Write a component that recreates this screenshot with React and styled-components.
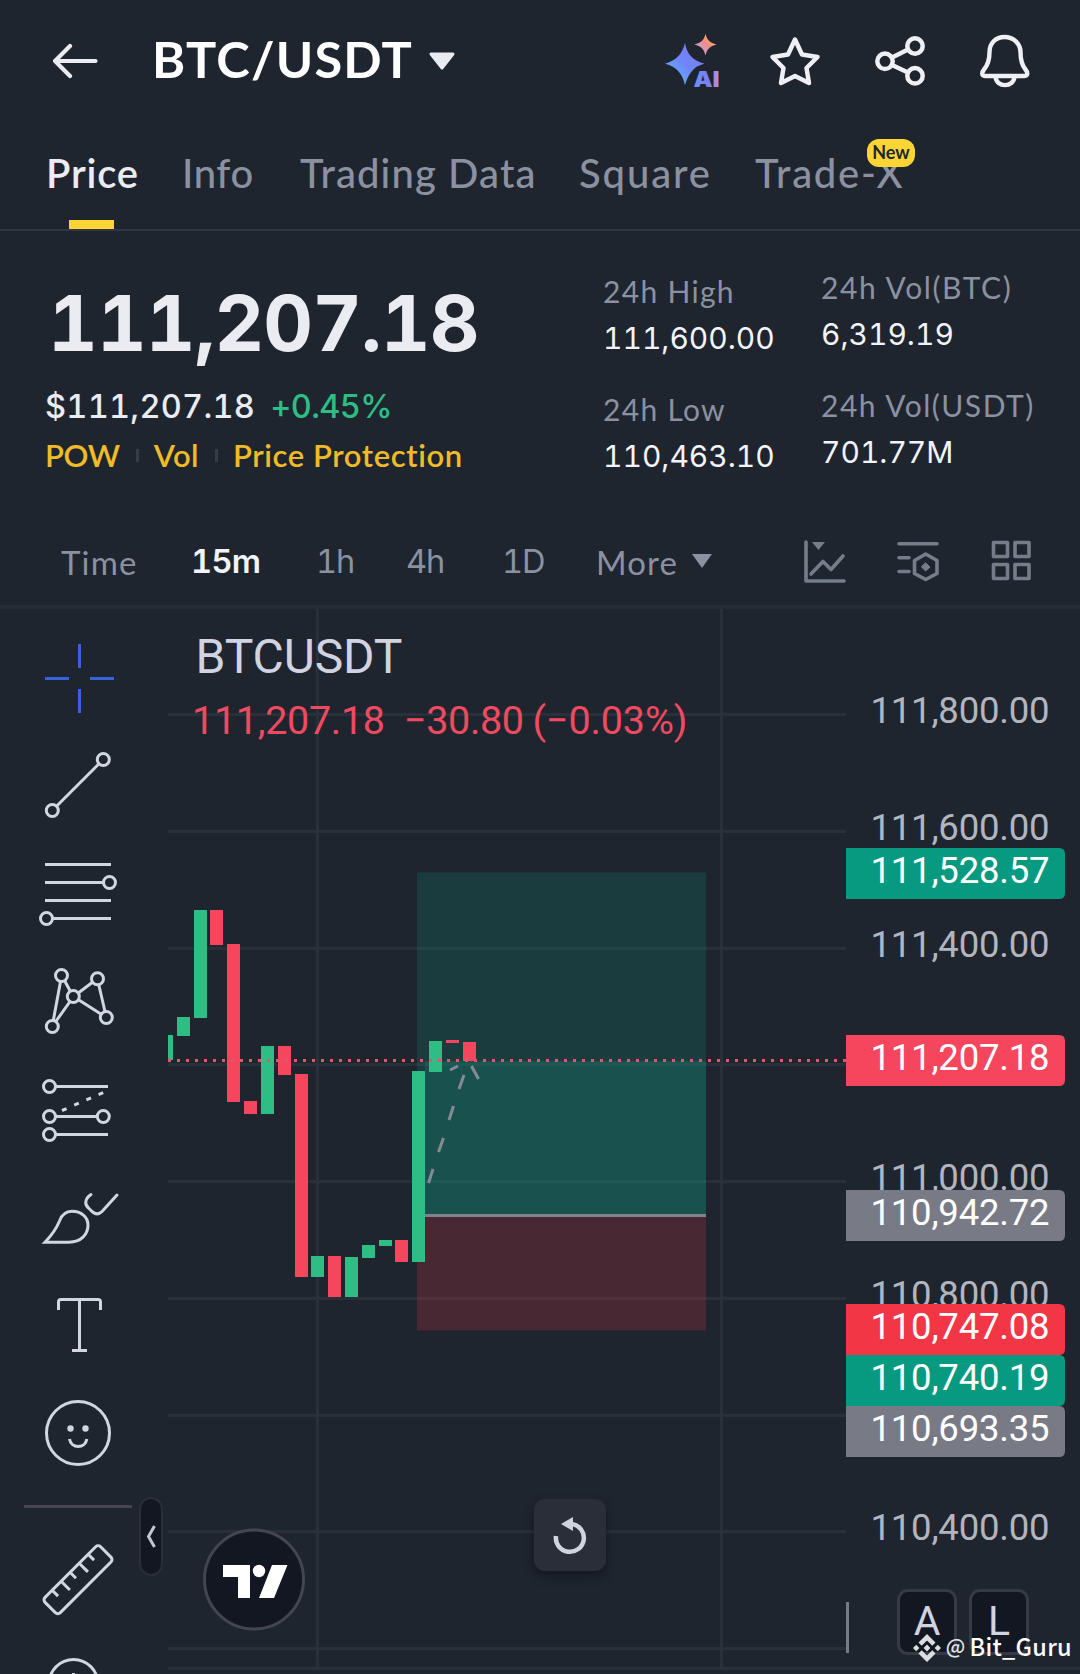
import React from "react";
import styled, { createGlobalStyle } from "styled-components";

const GlobalStyle = createGlobalStyle`
  * { box-sizing: border-box; }
  html, body { margin: 0; padding: 0; background: #1f252f; }
  body { width: 1080px; height: 1674px; overflow: hidden; }
`;

const words = `Lato, "Open Sans", sans-serif`;
const figures = `Inter, "Open Sans", sans-serif`;
const chartFont = `Roboto, "Liberation Sans", sans-serif`;

const Screen = styled.main`
  width: 1080px;
  height: 1674px;
  display: flex;
  flex-direction: column;
  overflow: hidden;
  background: #1f252f;
  color: #eaecef;
  font-family: ${words};
`;

const Label = styled.span`
  display: block;
  white-space: nowrap;
  font-family: ${(p) => (p.$figures ? figures : words)};
  font-feature-settings: ${(p) => (p.$figures ? '"tnum"' : "normal")};
  font-size: ${(p) => p.$size}px;
  line-height: ${(p) => p.$line || 40}px;
  font-weight: ${(p) => p.$weight || 400};
  letter-spacing: ${(p) => p.$track || 0}px;
  color: ${(p) => p.$color || "#eaecf2"};
`;

const Header = styled.header`
  height: 120px;
  display: flex;
  align-items: center;
  padding: 0 51px 0 53px;
`;

const BackIcon = styled.svg`
  width: 45px;
  height: 38px;
  margin-right: 54px;
`;

const Pair = styled.div`
  display: flex;
  align-items: center;
  gap: 15px;
  flex: 1;
  padding-bottom: 2px;
`;

const CaretIcon = styled.svg`
  width: 28px;
  height: 20px;
  margin-top: 3px;
`;

const HeaderActions = styled.div`
  display: grid;
  grid-template-columns: repeat(4, 60px);
  column-gap: 45px;
  margin-right: -6px;
`;

const ActionIcon = styled.svg`
  width: 60px;
  height: 60px;
  overflow: visible;
`;

const Tabs = styled.nav`
  height: 111px;
  display: grid;
  grid-template-columns: 136px 118px 279px 176px 160px;
  padding-left: 46px;
  border-bottom: 2px solid #303640;
`;

const Tab = styled.div`
  position: relative;
  height: 109px;
  padding-top: 33px;
  &::after {
    content: "";
    display: ${(p) => (p.$active ? "block" : "none")};
    width: 45px;
    height: 9px;
    margin: 27px 0 0 23px;
    background: #fcd535;
  }
`;

const NewBadge = styled.span`
  position: absolute;
  left: 112px;
  top: 19px;
  width: 48px;
  height: 28px;
  border-radius: 12px;
  background: #fcd535;
  color: #202630;
  font: 700 18px/27px ${words};
  text-align: center;
`;

const Quote = styled.section`
  height: 289px;
  display: grid;
  grid-template-columns: 558px 218px 1fr;
  padding: 0 0 0 45px;
`;

const Headline = styled.div`
  padding-top: 42px;
`;

const LastPrice = styled(Label)`
  padding-left: 3px;
  margin-bottom: 14px;
`;

const Row = styled.div`
  display: flex;
  align-items: center;
  gap: ${(p) => p.$gap || 0}px;
`;

const TagRow = styled(Row)`
  margin-top: 8px;
`;

const TagDivider = styled.i`
  width: 3px;
  height: 13px;
  background: #373c47;
  margin: 0 ${(p) => p.$after}px 0 ${(p) => p.$before}px;
`;

const Stats = styled.div`
  padding-top: ${(p) => p.$top}px;
  display: grid;
  grid-template-rows: 118px 118px;
`;

const Intervals = styled.nav`
  height: 89px;
  display: flex;
  align-items: flex-start;
  justify-content: space-between;
  padding: 20px 49px 0 61px;
  border-bottom: 4px solid #262c36;
`;

const IntervalList = styled.div`
  display: grid;
  grid-template-columns: 130px 125px 90px 96px 94px 130px;
  padding-top: 1px;
`;

const Interval = styled(Row)`
  padding-top: ${(p) => (p.$figures ? 1 : 0)}px;
`;

const ToolIcons = styled.div`
  display: grid;
  grid-template-columns: repeat(3, 44px);
  column-gap: 49px;
  margin: -1px -2px 0 0;
`;

const SmallIcon = styled.svg`
  width: 44px;
  height: 44px;
  fill: none;
  stroke: #757d8a;
  stroke-width: 3.6;
  stroke-linecap: round;
  stroke-linejoin: round;
`;

const Workspace = styled.section`
  position: relative;
  flex: 1;
  min-height: 0;
  display: flex;
`;

const Drawing = styled.aside`
  width: 168px;
  padding: 16px 0 0 24px;
`;

const Tool = styled.svg`
  display: block;
  width: 108px;
  height: 108px;
  fill: none;
  stroke: #d1d6e2;
  stroke-width: 3;
`;

const ToolRule = styled.hr`
  width: 108px;
  height: 3px;
  border: 0;
  margin: 16px 0 18px;
  background: #434651;
`;

const Plot = styled.svg`
  display: block;
  width: 912px;
  height: 1065px;
  text {
    font-family: ${chartFont};
  }
`;

const CollapseHandle = styled.button`
  position: absolute;
  left: 139px;
  top: 888px;
  width: 24px;
  height: 79px;
  padding: 0;
  border: 2px solid #2a2e39;
  border-radius: 12px;
  background: #131722;
`;

const ResetButton = styled.button`
  position: absolute;
  left: 534px;
  top: 890px;
  width: 72px;
  height: 72px;
  padding: 0;
  border: 0;
  border-radius: 11px;
  background: #2a2e39;
  box-shadow: 0 5px 10px rgba(10, 13, 22, 0.55);
`;

const BrandMark = styled.svg`
  position: absolute;
  left: 202.5px;
  top: 919px;
  width: 103px;
  height: 103px;
`;

const ScaleKeys = styled.div`
  position: absolute;
  left: 897px;
  top: 980px;
  display: flex;
  gap: 12px;
`;

const ScaleKey = styled.button`
  width: 60px;
  height: 66px;
  padding: 0 0 4px;
  border: 3px solid #363a45;
  border-radius: 11px;
  background: #131722;
  color: #d1d4e0;
  font: 400 41px/58px ${chartFont};
`;

const Signature = styled.div`
  position: absolute;
  right: 8px;
  top: 1020px;
  display: flex;
  align-items: center;
  height: 34px;
  color: #fff;
  font: 500 23.5px/34px "Noto Sans CJK SC", "Noto Sans", sans-serif;
  white-space: nowrap;
  letter-spacing: 0.3px;
`;

const SignatureMark = styled.svg`
  width: 28px;
  height: 28px;
  margin: 3px 5px 0 0;
  fill: #dcdde1;
`;

const At = styled.span`
  margin-right: 4px;
  font-size: 20px;
  color: #e3e4e8;
`;

const GREEN = "#2ebd85";
const RED = "#f6465d";
const MUTED = "#8b91a0";

const intervals = [
  ["Time", 33, 1.2],
  ["15m", 32.5, -0.6],
  ["1h", 32.5, -1],
  ["4h", 32.5, -1],
  ["1D", 32.5, -1],
  ["More", 33, 1.1],
];

// [x, width, top, bottom, rising]
const candles = [
  [168, 5, 1035, 1060, 1],
  [177, 13, 1017, 1036, 1],
  [194, 13, 910, 1018, 1],
  [210, 13, 910, 945, 0],
  [227, 13, 944, 1102, 0],
  [244, 13, 1101, 1114, 0],
  [261, 13, 1046, 1114, 1],
  [278, 13, 1046, 1075, 0],
  [295, 13, 1074, 1277, 0],
  [311, 13, 1256, 1277, 1],
  [328, 13, 1256, 1297, 0],
  [345, 13, 1257, 1297, 1],
  [362, 13, 1245, 1258, 1],
  [379, 13, 1240, 1246, 1],
  [395, 13, 1240, 1262, 0],
  [412, 13, 1071, 1262, 1],
  [429, 13, 1041, 1072, 1],
  [446, 13, 1040, 1043, 0],
  [463, 13, 1042, 1061, 0],
];

const gridRows = [714.5, 831.5, 948.5, 1064.5, 1181.5, 1298.5, 1415.5, 1531.5, 1648.5];

const axisPrices = [
  ["111,800.00", 723],
  ["111,600.00", 840],
  ["111,400.00", 957],
  ["111,000.00", 1190],
  ["110,800.00", 1307],
  ["110,400.00", 1540],
];

const priceTags = [
  ["111,528.57", 848, "#089981"],
  ["111,207.18", 1035, RED],
  ["110,942.72", 1190, "#787b86"],
  ["110,747.08", 1304, "#f23645"],
  ["110,740.19", 1355, "#089981"],
  ["110,693.35", 1406, "#787b86"],
];

function Candles() {
  return candles.map(([x, w, top, bottom, up]) => (
    <rect key={x} x={x} y={top} width={w} height={bottom - top} fill={up ? GREEN : RED} />
  ));
}

function PriceChart() {
  return (
    <Plot viewBox="168 609 912 1065">
      <g stroke="#2a303a" strokeWidth="3">
        {gridRows.map((y) => (
          <line key={y} x1="168" x2="846" y1={y} y2={y} />
        ))}
        <line x1="317.5" x2="317.5" y1="609" y2="1667" />
        <line x1="721.5" x2="721.5" y1="609" y2="1667" />
        <line x1="168" x2="1080" y1="1668.5" y2="1668.5" />
      </g>
      <rect x="417" y="872.5" width="289" height="342" fill="rgba(8,153,129,.2)" />
      <rect x="425" y="1061" width="281" height="154" fill="rgba(22,160,135,.22)" />
      <rect x="417" y="1217" width="289" height="113.5" fill="rgba(242,54,69,.2)" />
      <line x1="417" x2="706" y1="1215.5" y2="1215.5" stroke="#7f848b" strokeWidth="3" />
      <Candles />
      <line x1="168" x2="846" y1="1060.5" y2="1060.5" stroke="#e2566c" strokeWidth="3" strokeDasharray="3 6" />
      <g stroke="#858b93" strokeWidth="3" fill="none">
        <path d="M428.5 1183L433 1169M438.5 1152L443.500 1138M449 1120L453.500 1106M459 1089L464 1075" />
        <path d="M450 1070L458 1066M471.500 1066L478.500 1079" />
      </g>
      <text x="195.500" y="673" fontSize="48" fill="#d1d4e0" textLength="207" lengthAdjust="spacing">BTCUSDT</text>
      <g fontSize="39.500" fill="#f04a60">
        <text x="192" y="734" textLength="193">111,207.18</text>
        <text x="404" y="734" textLength="120">−30.80</text>
        <text x="532.500" y="734" textLength="155">(−0.03%)</text>
      </g>
      <g fontSize="36.500" fill="#b2b5be">
        {axisPrices.map(([label, y]) => (
          <text key={label} x="870.500" y={y} textLength="179">{label}</text>
        ))}
      </g>
      {priceTags.map(([label, y, color]) => (
        <g key={label}>
          <path d={`M846 ${y} h213 q6 0 6 6 v39 q0 6 -6 6 h-213 z`} fill={color} />
          <text x="870.500" y={y + 35} fontSize="36.500" fill="#fff" textLength="179">{label}</text>
        </g>
      ))}
      <line x1="847.5" x2="847.5" y1="1602" y2="1653" stroke="#787b86" strokeWidth="3" />
    </Plot>
  );
}

function DrawingTools() {
  return (
    <Drawing>
      <Tool viewBox="24 625 108 108">
        <path d="M79.5 644V668M79.5 689V713M45 678.5H69M90 678.5H114" stroke="#3763dc" />
      </Tool>
      <Tool viewBox="24 733 108 108">
        <circle cx="52.3" cy="810.5" r="6" />
        <circle cx="103.3" cy="759.5" r="6" />
        <path d="M56.5 806.3L99 763.7" />
      </Tool>
      <Tool viewBox="24 841 108 108">
        <path d="M45 864.5H111M45 882.5H103M45 900.5H111M53 918.5H111" />
        <circle cx="109.5" cy="882.5" r="6" />
        <circle cx="46.5" cy="918.5" r="6" />
      </Tool>
      <Tool viewBox="24 949 108 108">
        <circle cx="61.5" cy="975.5" r="6" />
        <circle cx="97.5" cy="978.7" r="6" />
        <circle cx="73.3" cy="996.5" r="6" />
        <circle cx="52.3" cy="1026.5" r="6" />
        <circle cx="106.3" cy="1017.5" r="6" />
        <path d="M60.5 981.5L53.3 1020.5M64.5 980.5L70.3 991.3M70 1001.5L55.8 1021.5M78.3 993L92.5 982.2M78.5 999.7L101.2 1014.3M98.7 984.5L105 1011.5" />
      </Tool>
      <Tool viewBox="24 1057 108 108">
        <circle cx="49.5" cy="1086.5" r="6" />
        <circle cx="49.5" cy="1116.5" r="6" />
        <circle cx="103.3" cy="1116.5" r="6" />
        <circle cx="49.5" cy="1134.5" r="6" />
        <path d="M55.5 1086.5H108M55.5 1116.5H97.3M55.5 1134.5H108" />
        <path d="M62 1110.5L104 1092.3" strokeDasharray="5 8.3" />
      </Tool>
      <Tool viewBox="24 1165 108 108">
        <path d="M45 1242.2H69C81 1242.2 88 1234.5 88 1225C88 1217 81 1211.3 72 1211.3C65 1211.3 61.5 1215.5 59.5 1221C56 1229.5 51 1236 45 1242.2Z" />
        <path d="M91 1194.5C84.5 1199 84.5 1204.5 88.5 1208L92 1211.5C95.5 1214.5 99 1214.5 102 1211.5L117 1195" strokeLinecap="round" />
      </Tool>
      <Tool viewBox="24 1273 108 108">
        <path d="M58.5 1310V1302Q58.5 1299.5 61 1299.5H98Q100.5 1299.5 100.5 1302V1310M79.5 1299.5V1350.5M72 1350.5H87" />
      </Tool>
      <Tool viewBox="24 1381 108 108">
        <circle cx="78" cy="1433" r="31.5" />
        <circle cx="70.5" cy="1428.5" r="3.2" fill="#d1d6e2" stroke="none" />
        <circle cx="85.5" cy="1428.5" r="3.2" fill="#d1d6e2" stroke="none" />
        <path d="M69.5 1439C71 1449 85.5 1449 86.8 1439" />
      </Tool>
      <ToolRule />
      <Tool viewBox="24 1526 108 108">
        <g transform="translate(78 1579.7) rotate(-45)">
          <rect x="-39.3" y="-10.8" width="78.6" height="21.6" rx="3.5" />
          <path d="M-25.7 -10.5v8M-13 -10.5v12M-0.4 -10.5v8M12.5 -10.5v12M25.2 -10.5v8" />
        </g>
      </Tool>
      <Tool viewBox="24 1634 108 108">
        <circle cx="73.5" cy="1684" r="24.5" />
        <path d="M73.5 1673V1695M62.5 1684H84.5" />
      </Tool>
    </Drawing>
  );
}

function HeaderBar() {
  return (
    <Header>
      <BackIcon viewBox="53 41 45 38">
        <path d="M95.5 61H55M70 46L55 61L70 76" fill="none" stroke="#eaecf2" strokeWidth="4.2" strokeLinecap="round" strokeLinejoin="round" />
      </BackIcon>
      <Pair>
        <Label $size={50.5} $weight={700} $line={60} $track={1.2} $color="#fff">BTC/USDT</Label>
        <CaretIcon viewBox="0 0 28 20">
          <path d="M3 3H25L14 17Z" fill="#eaecf2" stroke="#eaecf2" strokeWidth="3" strokeLinejoin="round" />
        </CaretIcon>
      </Pair>
      <HeaderActions>
        <ActionIcon viewBox="660 30 60 60">
          <defs>
            <linearGradient id="spark" x1="0" y1="1" x2="1" y2="0">
              <stop offset="0" stopColor="#5fc0f8" />
              <stop offset=".5" stopColor="#6f86fa" />
              <stop offset="1" stopColor="#7c77f7" />
            </linearGradient>
            <linearGradient id="ember" x1="0" y1="1" x2="1" y2="0">
              <stop offset=".2" stopColor="#b9a7d8" />
              <stop offset=".55" stopColor="#f48a86" />
              <stop offset=".85" stopColor="#f5c451" />
            </linearGradient>
            <linearGradient id="letters" x1="0" y1="0" x2="1" y2="0">
              <stop offset="0" stopColor="#6a92fa" />
              <stop offset=".6" stopColor="#7d7df0" />
              <stop offset="1" stopColor="#c094dc" />
            </linearGradient>
          </defs>
          <path d="M685 43C687 54 692 60 704.5 63.7C700 65 696 66.5 694 69C690 73 687.5 77 685 85C682 73 677 67 665 63.7C677 60 682 54 685 43Z" fill="url(#spark)" />
          <path d="M705.5 34C707 40 710 43 716.5 44.5C710 46 707 49 705.5 55.5C704 49 701 46 694.5 44.5C701 43 704 40 705.5 34Z" fill="url(#ember)" />
          <text x="693.5" y="87" fontFamily="Inter" fontWeight="900" fontSize="22" textLength="26" lengthAdjust="spacingAndGlyphs" fill="url(#letters)">AI</text>
        </ActionIcon>
        <ActionIcon viewBox="765 30 60 60" fill="none" stroke="#eef0f6" strokeWidth="4.5" strokeLinejoin="round">
          <path d="M795 39.5L802 54.5L817.5 57L806.5 68L809 83L795 76L781 83L783.5 68L772.5 57L788 54.5Z" />
        </ActionIcon>
        <ActionIcon viewBox="870 30 60 60" fill="none" stroke="#eef0f6" strokeWidth="4.5">
          <circle cx="885" cy="61.3" r="7.7" />
          <circle cx="915" cy="46" r="7.7" />
          <circle cx="915" cy="75.8" r="7.7" />
          <path d="M892 57.5L908 49.5M892 65L908 72.5" />
        </ActionIcon>
        <ActionIcon viewBox="975 30 60 60" fill="none" stroke="#eef0f6" strokeWidth="4.4" strokeLinejoin="round">
          <path d="M1004.5 37C995.5 37 989.5 43.5 989.5 52C989.5 62 987 66 984 69.5C981.5 72.5 981.5 76 985 76H1024.5C1028 76 1028 72.5 1025.5 69.5C1022.5 66 1020.5 62 1020.5 52C1020.5 43.5 1013.5 37 1004.5 37Z" />
          <path d="M995.5 76.5C996 88 1014 88 1014.5 76.5" />
        </ActionIcon>
      </HeaderActions>
    </Header>
  );
}

function TabBar() {
  return (
    <Tabs>
      <Tab $active><Label $size={40} $weight={600} $track={0.8}>Price</Label></Tab>
      <Tab><Label $size={40} $weight={500} $track={0.6} $color={MUTED}>Info</Label></Tab>
      <Tab><Label $size={40} $weight={500} $track={1.1} $color={MUTED}>Trading Data</Label></Tab>
      <Tab><Label $size={40} $weight={500} $track={1.9} $color={MUTED}>Square</Label></Tab>
      <Tab>
        <Label $size={40} $weight={500} $track={1.7} $color={MUTED}>Trade-X</Label>
        <NewBadge>New</NewBadge>
      </Tab>
    </Tabs>
  );
}

function Stat({ name, value, track }) {
  return (
    <div>
      <Label $size={30} $line={36} $color={MUTED} $track={track}>{name}</Label>
      <Label $figures $size={30} $line={58} $color="#f2f4fa">{value}</Label>
    </div>
  );
}

function QuotePanel() {
  return (
    <Quote>
      <Headline>
        <LastPrice $figures $size={77} $line={100} $weight={700} $track={-0.9}>111,207.18</LastPrice>
        <Row $gap={15}>
          <Label $figures $size={32.5} $line={40} $weight={500} $track={0.3}>$111,207.18</Label>
          <Label $figures $size={32.5} $line={40} $weight={500} $track={-0.6} $color={GREEN}>+0.45%</Label>
        </Row>
        <TagRow>
          <Label $size={31} $weight={600} $track={-0.4} $color="#eebc28">POW</Label>
          <TagDivider $before={16} $after={15} />
          <Label $size={31} $weight={600} $track={0.4} $color="#eebc28">Vol</Label>
          <TagDivider $before={16} $after={15} />
          <Label $size={31} $weight={600} $track={0.6} $color="#eebc28">Price Protection</Label>
        </TagRow>
      </Headline>
      <Stats $top={42}>
        <Stat name="24h High" value="111,600.00" track={1.3} />
        <Stat name="24h Low" value="110,463.10" track={1.3} />
      </Stats>
      <Stats $top={38}>
        <Stat name="24h Vol(BTC)" value="6,319.19" track={1.6} />
        <Stat name="24h Vol(USDT)" value="701.77M" track={1.5} />
      </Stats>
    </Quote>
  );
}

function IntervalBar() {
  return (
    <Intervals>
      <IntervalList>
        {intervals.map(([name, size, track]) => {
          const active = name === "15m";
          const numeric = /\d/.test(name);
          return (
            <Interval key={name} $gap={13} $figures={numeric}>
              <Label
                $figures={numeric}
                $size={size}
                $track={track}
                $weight={active ? 600 : 400}
                $color={active ? "#f2f4fa" : MUTED}
              >
                {name}
              </Label>
              {name === "More" && (
                <svg width="22" height="16" viewBox="0 0 22 16">
                  <path d="M1 0H21L11 14Z" fill={MUTED} />
                </svg>
              )}
            </Interval>
          );
        })}
      </IntervalList>
      <ToolIcons>
        <SmallIcon viewBox="803 539 44 44">
          <path d="M806 542V581H844M811 574L823 561.5L831 569.5L843 556" />
          <path d="M812 542H825L818.5 550Z" fill="#757d8a" stroke="none" />
        </SmallIcon>
        <SmallIcon viewBox="896 539 44 44">
          <path d="M899 543.7H937M899 557.8H909M899 571.5H909M925.7 554L937 560.5V573.5L925.7 579.5L914.5 573.5V560.5Z" />
          <path d="M925.7 563L930 567L925.7 571L921.5 567Z" fill="#757d8a" strokeWidth="1" />
        </SmallIcon>
        <SmallIcon viewBox="989 539 44 44">
          <path d="M993.5 542.5h14v14h-14zM1015 542.5h14v14h-14zM993.5 564.5h14v14h-14zM1015 564.5h14v14h-14z" />
        </SmallIcon>
      </ToolIcons>
    </Intervals>
  );
}

export default function App() {
  return (
    <Screen>
      <GlobalStyle />
      <HeaderBar />
      <TabBar />
      <QuotePanel />
      <IntervalBar />
      <Workspace>
        <DrawingTools />
        <PriceChart />
        <CollapseHandle aria-label="Collapse">
          <svg width="20" height="75" viewBox="141 1499 20 75" fill="none" stroke="#c3c6d0" strokeWidth="3">
            <path d="M154.5 1526L148.5 1536.5L154.5 1547" />
          </svg>
        </CollapseHandle>
        <BrandMark viewBox="202 1528 103 103">
          <circle cx="253" cy="1579.5" r="49.5" fill="#131722" stroke="#434651" strokeWidth="3" />
          <path d="M222 1565H249V1598H237V1577H222ZM271 1565H286.5L273 1598H258Z" fill="#fff" />
          <circle cx="258" cy="1571" r="6.2" fill="#fff" />
        </BrandMark>
        <ResetButton aria-label="Reset">
          <svg width="72" height="72" viewBox="534 1499 72 72">
            <path d="M556 1536A14 14 0 1 0 572 1524" fill="none" stroke="#d1d4e0" strokeWidth="4.5" />
            <path d="M561 1524L573 1517V1531Z" fill="#d1d4e0" />
          </svg>
        </ResetButton>
        <ScaleKeys>
          <ScaleKey>A</ScaleKey>
          <ScaleKey>L</ScaleKey>
        </ScaleKeys>
        <Signature>
          <SignatureMark viewBox="0 0 28 28">
            <path d="M14 0L22.5 8.5L19.3 11.7L14 6.4L8.7 11.7L5.5 8.5ZM14 28L22.5 19.5L19.3 16.3L14 21.6L8.7 16.3L5.5 19.5ZM14 10.6L17.4 14L14 17.4L10.6 14ZM3.2 10.8L6.4 14L3.2 17.2L0 14ZM24.8 10.8L28 14L24.8 17.2L21.6 14Z" />
          </SignatureMark>
          <At>@</At>
          <span>Bit_Guru</span>
        </Signature>
      </Workspace>
    </Screen>
  );
}
